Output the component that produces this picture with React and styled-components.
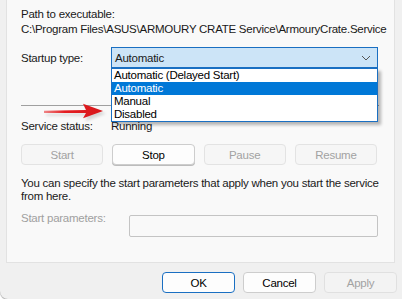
import React from 'react';
import styled, { createGlobalStyle } from 'styled-components';

const ITEMS = ['Automatic (Delayed Start)', 'Automatic', 'Manual', 'Disabled'];
const SERVICE_BUTTONS = [
  { label: 'Start', disabled: true },
  { label: 'Stop', disabled: false },
  { label: 'Pause', disabled: true },
  { label: 'Resume', disabled: true },
];

const Global = createGlobalStyle`
  html, body { margin: 0; padding: 0; background: #ffffff; }
  body {
    font-family: "Liberation Sans", Arial, sans-serif;
    font-size: 11.5px;
    letter-spacing: -0.25px;
    color: #1a1a1a;
  }
`;

const Chevron = () => (
  <svg width="10" height="6" viewBox="0 0 10 6">
    <path d="M1 1 L5 5 L9 1" fill="none" stroke="#555" strokeWidth="1" />
  </svg>
);

const RedArrow = () => (
  <svg width="64" height="22" viewBox="0 0 64 22">
    <defs>
      <linearGradient id="shaft" x1="0" x2="1" y1="0" y2="0">
        <stop offset="0" stopColor="#e8282a" stopOpacity="0.55" />
        <stop offset="0.35" stopColor="#e41e22" />
        <stop offset="1" stopColor="#d8171b" />
      </linearGradient>
      <filter id="soft" x="-10%" y="-30%" width="120%" height="160%">
        <feGaussianBlur stdDeviation="1.4" />
      </filter>
    </defs>
    <path d="M2 11 L44 10 L41 3.5 L62 10.5 L41 18.5 L44 12.8 L2 12.8 Z" fill="#000" opacity="0.14" filter="url(#soft)" transform="translate(1,2)" />
    <path d="M1 9.8 L43 8.9 L40 2.8 L60 10 L40 17.2 L43 11.9 L1 11.9 Z" fill="url(#shaft)" />
  </svg>
);

const App = () => (
  <>
    <Global />
    <Window>
      <Panel>
        <Line>Path to executable:</Line>
        <Line>C:\Program Files\ASUS\ARMOURY CRATE Service\ArmouryCrate.Service</Line>
        <StartupRow>
          <Label>Startup type:</Label>
          <ComboWrap>
            <Combo>
              <span>Automatic</span>
              <Chevron />
            </Combo>
            <List>
              {ITEMS.map((it) => (
                <Item key={it} $selected={it === 'Automatic'}>{it}</Item>
              ))}
            </List>
          </ComboWrap>
        </StartupRow>
        <Separator />
        <StatusRow>
          <Label>Service status:</Label>
          <span>Running</span>
          <ArrowSpot><RedArrow /></ArrowSpot>
        </StatusRow>
        <ButtonRow>
          {SERVICE_BUTTONS.map((b) => (
            <Button key={b.label} $disabled={b.disabled}>{b.label}</Button>
          ))}
        </ButtonRow>
        <Paragraph>
          You can specify the start parameters that apply when you start the service
          <br />
          from here.
        </Paragraph>
        <ParamRow>
          <ParamLabel>Start parameters:</ParamLabel>
          <Input />
        </ParamRow>
      </Panel>
      <Footer>
        <DialogButton $primary>OK</DialogButton>
        <DialogButton>Cancel</DialogButton>
        <DialogButton $disabled>Apply</DialogButton>
      </Footer>
    </Window>
  </>
);

const Window = styled.div`
  width: 402px;
  height: 299px;
  background: #f0f0f0;
  border-bottom-left-radius: 8px;
  box-shadow: 0 1px 1px rgba(0, 0, 0, 0.35);
  display: flex;
  flex-direction: column;
  overflow: hidden;
`;

const Panel = styled.div`
  margin-left: 6px;
  width: 389px;
  height: 263px;
  background: #f9f9f9;
  border: 1px solid #e2e2e2;
  border-top: none;
  padding: 7px 0 0 14px;
  box-sizing: border-box;
  display: flex;
  flex-direction: column;
`;

const Line = styled.div`
  line-height: 15px;
  white-space: nowrap;
`;

const Label = styled.span`
  width: 90px;
  flex: none;
`;

const StartupRow = styled.div`
  display: flex;
  align-items: center;
  margin-top: 10px;
  height: 21px;
`;

const ComboWrap = styled.div`
  position: relative;
  width: 267px;
`;

const Combo = styled.div`
  height: 21px;
  box-sizing: border-box;
  border: 1px solid #1a6fc2;
  background: #cce4f7;
  display: flex;
  align-items: center;
  justify-content: space-between;
  padding: 0 6px 0 3px;
`;

const List = styled.div`
  position: absolute;
  top: 21px;
  left: 0;
  width: 267px;
  box-sizing: border-box;
  background: #fff;
  border: 1px solid #1a6fc2;
  box-shadow: 3px 3px 3px rgba(0, 0, 0, 0.28);
  z-index: 2;
`;

const Item = styled.div`
  height: 13px;
  line-height: 13px;
  padding-left: 2px;
  background: ${(p) => (p.$selected ? '#0078d7' : 'transparent')};
  color: ${(p) => (p.$selected ? '#fff' : '#000')};
  white-space: nowrap;
`;

const Separator = styled.div`
  margin-top: 37px;
  width: 358px;
  height: 1px;
  background: #a0a0a0;
`;

const StatusRow = styled.div`
  position: relative;
  display: flex;
  align-items: center;
  height: 15px;
  margin-top: 12px;
`;

const ArrowSpot = styled.div`
  position: absolute;
  left: 22px;
  top: -17px;
`;

const ButtonRow = styled.div`
  display: flex;
  gap: 9px;
  margin-top: 11px;
  width: 356px;
`;

const Button = styled.div`
  flex: 1;
  height: 21px;
  box-sizing: border-box;
  border-radius: 4px;
  border: 1px solid ${(p) => (p.$disabled ? '#e3e3e3' : '#cdcdcd')};
  background: ${(p) => (p.$disabled ? '#f6f6f6' : '#fdfdfd')};
  color: ${(p) => (p.$disabled ? '#a2a2a2' : '#000')};
  display: flex;
  align-items: center;
  justify-content: center;
  box-shadow: ${(p) => (p.$disabled ? 'none' : '0 1px 0 #bcbcbc')};
`;

const Paragraph = styled.div`
  margin-top: 12px;
  line-height: 13px;
  white-space: nowrap;
`;

const ParamRow = styled.div`
  display: flex;
  align-items: flex-start;
  margin-top: 8px;
`;

const ParamLabel = styled.span`
  width: 108px;
  line-height: 15px;
  color: #a0a0a0;
`;

const Input = styled.div`
  width: 249px;
  height: 22px;
  margin-top: 4px;
  box-sizing: border-box;
  border: 1px solid #c4c4c4;
  border-radius: 2px;
  background: #f9f9f9;
`;

const Footer = styled.div`
  display: flex;
  justify-content: flex-end;
  gap: 8px;
  padding: 9px 5px 0 0;
`;

const DialogButton = styled.div`
  width: 73px;
  height: 21px;
  box-sizing: border-box;
  border-radius: 4px;
  border: 1px solid ${(p) => (p.$primary ? '#1a6fc2' : p.$disabled ? '#e0e0e0' : '#cdcdcd')};
  background: ${(p) => (p.$disabled ? '#f3f3f3' : '#fdfdfd')};
  color: ${(p) => (p.$disabled ? '#a2a2a2' : '#000')};
  display: flex;
  align-items: center;
  justify-content: center;
`;

export default App;
